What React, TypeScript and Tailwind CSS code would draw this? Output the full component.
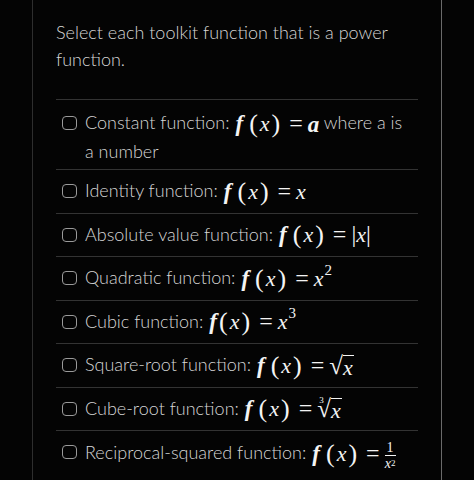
import React from "react";

const serif = "font-['Liberation_Serif','DejaVu_Serif',serif]";

function F({ tight }: { tight?: boolean }) {
  return (
    <span className={`${serif} ml-[6px] inline-flex items-center text-[#f4f4f4] align-middle -mt-[3px]`}>
      <span className="italic font-bold text-[23px] leading-[27px]">f</span>
      <span className={`${tight ? "ml-[2px]" : "ml-[6px]"} text-[26px] leading-[27px]`}>(</span>
      <span className="italic text-[22px] leading-[27px] px-[2px]">x</span>
      <span className="text-[26px] leading-[27px]">)</span>
      <span className="ml-[9px] mr-[5px] text-[24px] leading-[27px]">=</span>
    </span>
  );
}

function X({ sup }: { sup?: string }) {
  return (
    <span className={`${serif} inline-flex items-start text-[#f4f4f4] align-middle -mt-[3px]`}>
      <span className="italic text-[22px] leading-[27px]">x</span>
      {sup && <span className="text-[15px] leading-none -mt-[2px] ml-[1px]">{sup}</span>}
    </span>
  );
}

type Row = { label: string; math: React.ReactNode; tail?: React.ReactNode; h: string; tight?: boolean };

const rows: Row[] = [
  {
    label: "Constant function:",
    math: (
      <span className={`${serif} italic font-bold text-[23px] leading-[27px] text-[#f4f4f4] align-middle`}>a</span>
    ),
    tail: (
      <>
        {" "}where a is
        <br />a number
      </>
    ),
    h: "h-[70px]",
  },
  { label: "Identity function:", math: <X />, h: "h-[43.5px]" },
  {
    label: "Absolute value function:",
    math: (
      <span className={`${serif} inline-flex items-center text-[#f4f4f4] align-middle -mt-[3px]`}>
        <span className="text-[24px] leading-[27px]">|</span>
        <span className="italic text-[22px] leading-[27px]">x</span>
        <span className="text-[24px] leading-[27px]">|</span>
      </span>
    ),
    h: "h-[43.5px]",
  },
  { label: "Quadratic function:", math: <X sup="2" />, h: "h-[43.5px]" },
  { label: "Cubic function:", math: <X sup="3" />, h: "h-[43.5px]", tight: true },
  {
    label: "Square-root function:",
    math: (
      <span className={`${serif} inline-flex items-end text-[#f4f4f4] align-middle -mt-[3px]`}>
        <span className="text-[25px] leading-none">√</span>
        <span className="italic text-[22px] leading-[20px] border-t-[1.5px] border-[#f4f4f4] pt-[2px] pr-[1px]">x</span>
      </span>
    ),
    h: "h-[43.5px]",
  },
  {
    label: "Cube-root function:",
    math: (
      <span className={`${serif} relative inline-flex items-end text-[#f4f4f4] align-middle -mt-[3px]`}>
        <span className="absolute left-[2px] top-[0px] text-[9px] leading-none">3</span>
        <span className="text-[25px] leading-none">√</span>
        <span className="italic text-[22px] leading-[20px] border-t-[1.5px] border-[#f4f4f4] pt-[2px] pr-[1px]">x</span>
      </span>
    ),
    h: "h-[43.5px]",
  },
  {
    label: "Reciprocal-squared function:",
    math: (
      <span className={`${serif} inline-flex flex-col items-center text-[#f4f4f4] align-middle mt-[2px]`}>
        <span className="text-[14px] leading-[15px] px-[2px]">1</span>
        <span className="w-full border-t border-[#f4f4f4]" />
        <span className="text-[14px] leading-[15px] italic">
          x<span className="not-italic text-[9px] align-top">2</span>
        </span>
      </span>
    ),
    h: "h-[43.5px]",
  },
];

function Checkbox() {
  return (
    <span className="mt-[7px] w-[15px] h-[14px] shrink-0 rounded-[4px] border-[1.5px] border-[#9a9a9a]" />
  );
}

export default function App() {
  return (
    <div className="w-[474px] h-[480px] bg-[#040404] overflow-hidden font-['Lato','Liberation_Sans',sans-serif]">
      <div className="ml-[32px] w-[410px] h-[480px] border-l border-[#2e2e2e] border-r border-r-[#6a6a6a] pl-[23px] pr-[23px]">
        <p className="pt-[19px] text-[18px] leading-[27px] font-light text-[#d6d6d6]">
          Select each toolkit function that is a power function.
        </p>
        <div className="mt-[26px]">
          {rows.map((r, i) => (
            <div
              key={i}
              className={`${r.h} border-t border-[#333] flex items-start gap-[8px] pl-[6px] ${
                i === 0 ? "pt-[9px]" : "pt-[7px]"
              }`}
            >
              <Checkbox />
              <div className="text-[18px] leading-[27px] font-light text-[#d6d6d6] whitespace-nowrap">
                {r.label}
                <F tight={r.tight} />
                {r.math}
                {r.tail}
              </div>
            </div>
          ))}
        </div>
      </div>
    </div>
  );
}
